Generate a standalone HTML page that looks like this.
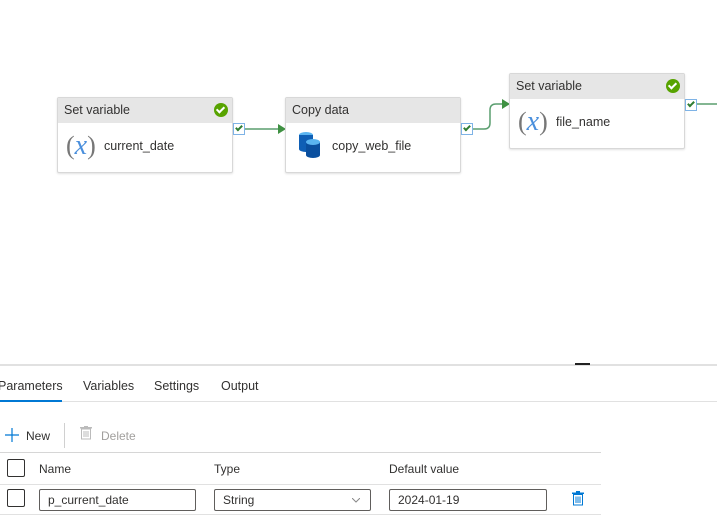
<!DOCTYPE html>
<html><head><style>
body{margin:0;width:717px;height:528px;background:#fff;font-family:"Liberation Sans",sans-serif;position:relative;overflow:hidden;color:#323130}
.act{position:absolute;width:174px;height:74px;border:1px solid #d8d8d8;background:#fff;box-shadow:0 1px 2px rgba(0,0,0,.12);border-radius:2px}
.act .h{height:25px;background:#e6e6e6;font-size:12.5px;line-height:25px;padding-left:6px;color:#323130;position:relative}
.ok{position:absolute;right:4px;top:5px;width:14px;height:14px;border-radius:50%;background:#57a300}
.ok:after{content:"";position:absolute;left:4px;top:2px;width:3px;height:6px;border:solid #fff;border-width:0 2px 2px 0;transform:rotate(45deg)}
.act .b{font-size:12.5px;position:absolute;top:25px;left:0;right:0;height:49px}
.x{position:absolute;left:8px;top:7px;font-family:"Liberation Serif",serif;font-size:26px;color:#777}
.x i{color:#4a8fdc;font-size:28px}
.lbl{position:absolute;left:46px;top:16px}
.cb{position:absolute;width:10px;height:10px;border:1px solid #7eb3e6;background:#fff}
.cb:after{content:"";position:absolute;left:3px;top:0;width:2px;height:5px;border:solid #2e7d32;border-width:0 2px 2px 0;transform:rotate(45deg)}
.tab{position:absolute;top:379px;font-size:12.5px}
.inp{position:absolute;top:489px;border:1px solid #605e5c;border-radius:2px;font-size:12px;line-height:20px;padding-left:8px;box-sizing:border-box;height:22px}
.chk{position:absolute;width:16px;height:16px;border:1px solid #323130;border-radius:2px}
</style></head><body>
<svg style="position:absolute;left:0;top:0" width="717" height="200">
<path d="M244 129 H278" stroke="#5a9e6f" stroke-width="1.5" fill="none"/>
<polygon points="278,124 286,129 278,134" fill="#3f9142"/>
<path d="M472 129 H484 Q490 129 490 123 V110 Q490 104 496 104 H503" stroke="#5a9e6f" stroke-width="1.5" fill="none"/>
<polygon points="502,99 510,104 502,109" fill="#3f9142"/>
<path d="M696 104 H717" stroke="#5a9e6f" stroke-width="1.5"/>
</svg>
<div class="act" style="left:57px;top:97px"><div class="h">Set variable<span class="ok"></span></div><div class="b"><span class="x">(<i>x</i>)</span><span class="lbl">current_date</span></div></div>
<div class="act" style="left:285px;top:97px"><div class="h">Copy data</div><div class="b">
<svg style="position:absolute;left:11px;top:8px" width="26" height="28"><ellipse cx="9" cy="4" rx="7" ry="3" fill="#5ab4f0"/><rect x="2" y="4" width="14" height="14" fill="#0f5fb5"/><ellipse cx="9" cy="18" rx="7" ry="3" fill="#0f5fb5"/><rect x="9" y="11" width="14" height="13" fill="#0a4f9e"/><ellipse cx="16" cy="24" rx="7" ry="3" fill="#0a4f9e"/><ellipse cx="16" cy="11" rx="7" ry="3" fill="#5ab4f0"/></svg>
<span class="lbl">copy_web_file</span></div></div>
<div class="act" style="left:509px;top:73px"><div class="h">Set variable<span class="ok"></span></div><div class="b"><span class="x">(<i>x</i>)</span><span class="lbl">file_name</span></div></div>
<div class="cb" style="left:233px;top:123px"></div>
<div class="cb" style="left:461px;top:123px"></div>
<div class="cb" style="left:685px;top:99px"></div>

<div style="position:absolute;left:0;top:364px;width:717px;height:2px;background:#e1e1e1"></div>
<div style="position:absolute;left:575px;top:363px;width:15px;height:2px;background:#222"></div>
<span class="tab" style="left:-2px">Parameters</span>
<span class="tab" style="left:83px">Variables</span>
<span class="tab" style="left:154px">Settings</span>
<span class="tab" style="left:221px">Output</span>
<div style="position:absolute;left:0;top:401px;width:717px;height:1px;background:#e1e1e1"></div>
<div style="position:absolute;left:0;top:400px;width:62px;height:2px;background:#0078d4"></div>
<svg style="position:absolute;left:5px;top:428px" width="14" height="14"><path d="M7 0V14M0 7H14" stroke="#0078d4" stroke-width="1.2"/></svg>
<span style="position:absolute;left:26px;top:429px;font-size:12px">New</span>
<div style="position:absolute;left:64px;top:423px;width:1px;height:25px;background:#d0d0d0"></div>
<svg style="position:absolute;left:80px;top:426px" width="12" height="14"><rect x="0" y="1" width="12" height="1.5" fill="#bbb"/><rect x="4" y="0" width="4" height="2" fill="#bbb"/><rect x="1.5" y="3" width="9" height="10" fill="none" stroke="#bbb"/><path d="M4 5V11M6 5V11M8 5V11" stroke="#bbb"/></svg>
<span style="position:absolute;left:101px;top:429px;font-size:12px;color:#a19f9d">Delete</span>
<div style="position:absolute;left:0;top:452px;width:601px;height:1px;background:#d6d6d6"></div>
<div class="chk" style="left:7px;top:459px"></div>
<span style="position:absolute;left:39px;top:462px;font-size:12px;color:#323130">Name</span>
<span style="position:absolute;left:214px;top:462px;font-size:12px">Type</span>
<span style="position:absolute;left:389px;top:462px;font-size:12px">Default value</span>
<div style="position:absolute;left:0;top:484px;width:601px;height:1px;background:#e1e1e1"></div>
<div class="chk" style="left:7px;top:489px"></div>
<div class="inp" style="left:39px;width:157px">p_current_date</div>
<div class="inp" style="left:214px;width:157px">String<svg style="position:absolute;right:10px;top:8px" width="8" height="5"><path d="M0 0L4 4L8 0" stroke="#888" fill="none"/></svg></div>
<div class="inp" style="left:389px;width:158px">2024-01-19</div>
<svg style="position:absolute;left:572px;top:491px" width="12" height="15"><rect x="0" y="1.5" width="12" height="1.5" fill="#0078d4"/><rect x="4" y="0" width="4" height="2" fill="#0078d4"/><rect x="1.5" y="3.5" width="9" height="10.5" fill="none" stroke="#0078d4"/><path d="M4 5.5V12M6 5.5V12M8 5.5V12" stroke="#0078d4"/></svg>
<div style="position:absolute;left:0;top:514px;width:601px;height:1px;background:#e1e1e1"></div>
</body></html>
